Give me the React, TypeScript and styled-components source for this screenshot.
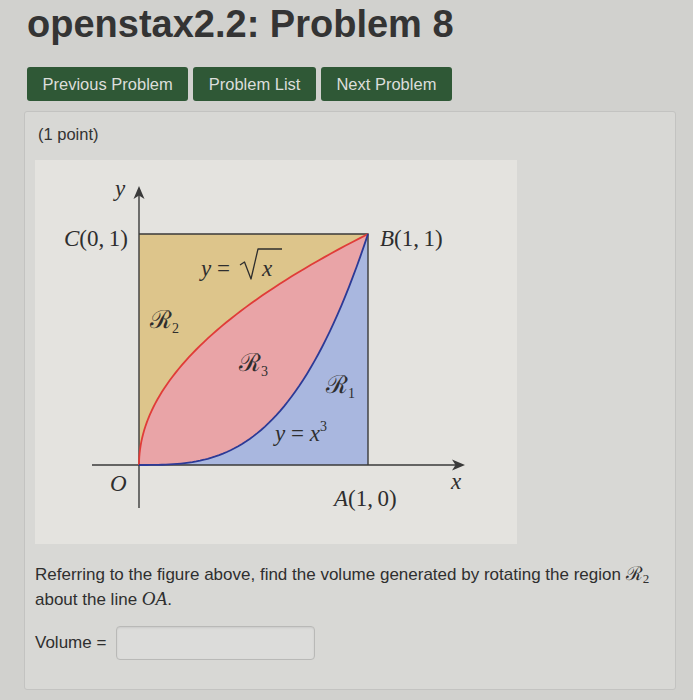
import React from "react";
import styled, { createGlobalStyle } from "styled-components";

const GlobalStyle = createGlobalStyle`
  html, body {
    margin: 0;
    padding: 0;
    background: #d1d1ce;
  }
  body {
    font-family: "Liberation Sans", Arial, sans-serif;
    color: #333;
  }
`;

// unit square of the figure, in page pixels (viewBox uses page coords)
const OX = 139;
const OY = 465;
const UX = 229;
const UY = 231;
const px = (u: number) => OX + UX * u;
const py = (v: number) => OY - UY * v;

function curve(f: (s: number) => [number, number], reverse = false) {
  const pts: string[] = [];
  for (let i = 0; i <= 60; i++) {
    const s = i / 60;
    const [u, v] = f(s);
    pts.push(`${px(u).toFixed(2)},${py(v).toFixed(2)}`);
  }
  if (reverse) pts.reverse();
  return pts;
}

const sqrtPts = curve((s) => [s * s, s]);
const cubePts = curve((s) => [s, s * s * s]);

export default function App() {
  return (
    <>
      <GlobalStyle />
      <Page>
        <Title>openstax2.2: Problem 8</Title>
        <NavRow>
          <NavButton>Previous Problem</NavButton>
          <NavButton>Problem List</NavButton>
          <NavButton>Next Problem</NavButton>
        </NavRow>

        <Panel>
          <Points>(1 point)</Points>
          <Figure>
            <RegionsChart />
          </Figure>

          <Question>
            Referring to the figure above, find the volume generated by rotating the region{" "}
            <Script>
              ℛ<sub>2</sub>
            </Script>
            <br />
            about the line <MathVar>OA</MathVar>.
          </Question>

          <AnswerRow>
            <AnswerLabel>Volume =</AnswerLabel>
            <AnswerInput type="text" />
          </AnswerRow>
        </Panel>
      </Page>
    </>
  );
}

function RegionsChart() {
  const r2 = `M${sqrtPts.join(" L")} L${px(0)},${py(1)} Z`;
  const r3 = `M${sqrtPts.join(" L")} L${curve((s) => [s, s * s * s], true).join(" L")} Z`;
  const r1 = `M${cubePts.join(" L")} L${px(1)},${py(0)} Z`;

  return (
    <svg width="482" height="384" viewBox="35 160 482 384">
      <path d={r2} fill="#ddc58b" />
      <path d={r3} fill="#e9a4a7" />
      <path d={r1} fill="#a9b7df" />

      {/* square sides */}
      <path
        d={`M${px(0)},${py(1)} L${px(1)},${py(1)} L${px(1)},${py(0)}`}
        fill="none"
        stroke="#3a3a3a"
        strokeWidth="1.4"
      />
      {/* axes */}
      <line x1={OX} y1={508} x2={OX} y2={192} stroke="#3a3a3a" strokeWidth="1.4" />
      <line x1={92} y1={OY} x2={458} y2={OY} stroke="#3a3a3a" strokeWidth="1.4" />
      <path d="M139,186 L144.5,199 L139,195.5 L133.5,199 Z" fill="#3a3a3a" />
      <path d="M465,465 L452,459.5 L455.5,465 L452,470.5 Z" fill="#3a3a3a" />

      {/* curves */}
      <polyline points={sqrtPts.join(" ")} fill="none" stroke="#e03c38" strokeWidth="1.8" />
      <polyline points={cubePts.join(" ")} fill="none" stroke="#2c3a96" strokeWidth="1.8" />

      <g fontFamily="'Liberation Serif', 'Times New Roman', serif" fontSize="23" fill="#2e2e2e">
        <text x="115" y="196" fontStyle="italic" fontSize="23">y</text>
        <text x="64" y="246">
          <tspan fontStyle="italic">C</tspan>(0,&#8201;1)
        </text>
        <text x="380" y="246">
          <tspan fontStyle="italic">B</tspan>(1,&#8201;1)
        </text>

        {/* y = √x, radical drawn as a stroke */}
        <text x="201" y="276">
          <tspan fontStyle="italic">y</tspan> =
        </text>
        <path
          d="M240,265 L244.5,262 L251,279 L258,249 L282,249"
          fill="none"
          stroke="#2e2e2e"
          strokeWidth="1.3"
          strokeLinejoin="round"
        />
        <text x="262" y="276" fontStyle="italic">x</text>

        <text x="275" y="441">
          <tspan fontStyle="italic">y</tspan> = <tspan fontStyle="italic">x</tspan>
          <tspan fontSize="14" dy="-10">3</tspan>
        </text>
        <text x="110" y="491" fontStyle="italic">O</text>
        <text x="451" y="489" fontStyle="italic">x</text>
        <text x="334" y="506">
          <tspan fontStyle="italic">A</tspan>(1,&#8201;0)
        </text>
      </g>

      <g fontFamily="'DejaVu Serif', 'Liberation Serif', serif" fontSize="25" fill="#2e2e2e">
        <text x="150" y="328">
          ℛ<tspan fontSize="14" dy="5" fontFamily="'Liberation Serif', serif">2</tspan>
        </text>
        <text x="239" y="371">
          ℛ<tspan fontSize="14" dy="5" fontFamily="'Liberation Serif', serif">3</tspan>
        </text>
        <text x="326" y="393">
          ℛ<tspan fontSize="14" dy="5" fontFamily="'Liberation Serif', serif">1</tspan>
        </text>
      </g>
    </svg>
  );
}

const Page = styled.div`
  padding: 0 17px 10px 24px;
`;

const Title = styled.h1`
  margin: 3px 0 0 3px;
  font-size: 38px;
  line-height: 42px;
  font-weight: 700;
  color: #343434;
`;

const NavRow = styled.div`
  display: flex;
  gap: 5px;
  margin: 22px 0 0 3px;
`;

const NavButton = styled.button`
  height: 34px;
  padding: 0 15.5px;
  border: none;
  border-radius: 3px;
  background: #2f5836;
  color: #dcdedb;
  font-family: "Liberation Sans", Arial, sans-serif;
  font-size: 16.5px;
  cursor: pointer;
`;

const Panel = styled.div`
  margin-top: 10px;
  width: 630px;
  padding: 12px 10px 29px 10px;
  border: 1px solid #c3c3c1;
  border-radius: 3px;
  background: #d8d8d5;
`;

const Points = styled.div`
  margin-left: 3px;
  font-size: 16.5px;
  line-height: 20px;
  color: #333;
`;

const Figure = styled.div`
  margin-top: 16px;
  width: 482px;
  height: 384px;
  background: #e4e3df;

  svg {
    display: block;
  }
`;

const Question = styled.p`
  margin: 18px 0 0 0;
  font-size: 17px;
  line-height: 25px;
  color: #2f2f2f;
`;

const Script = styled.span`
  font-family: "DejaVu Serif", "Liberation Serif", serif;
  font-size: 19px;
  line-height: 0;

  sub {
    font-family: "Liberation Serif", serif;
    font-size: 13px;
    line-height: 0;
    vertical-align: -3px;
  }
`;

const MathVar = styled.span`
  font-family: "Liberation Serif", "Times New Roman", serif;
  font-style: italic;
  font-size: 19px;
  line-height: 0;
`;

const AnswerRow = styled.div`
  display: flex;
  align-items: center;
  gap: 10px;
  margin-top: 14px;
`;

const AnswerLabel = styled.span`
  font-size: 17px;
  color: #2f2f2f;
`;

const AnswerInput = styled.input`
  width: 199px;
  height: 34px;
  box-sizing: border-box;
  border: 1px solid #b9b9b7;
  border-radius: 4px;
  background: #dcdcda;
  box-shadow: inset 0 1px 2px rgba(0, 0, 0, 0.08);
  outline: none;
`;
